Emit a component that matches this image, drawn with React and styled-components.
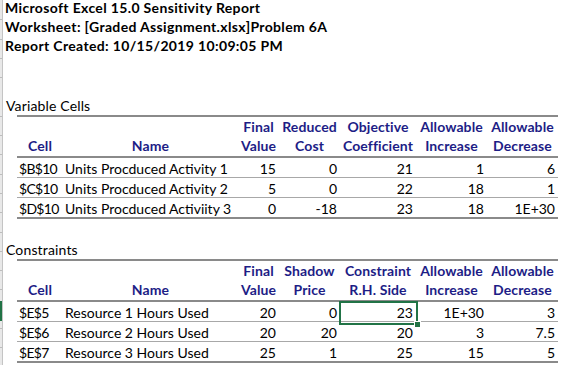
import styled, { createGlobalStyle } from "styled-components";

const GlobalStyle = createGlobalStyle`
  html, body {
    margin: 0;
    padding: 0;
    background: #fff;
  }
  body {
    font-family: Lato, "Liberation Sans", sans-serif;
    font-size: 14px;
    color: #000;
  }
`;

const COLS = "46px 175px 41px 61px 76px 71px 71px";

const variableRows = [
  ["$B$10", "Units Procduced Activity 1", "15", "0", "21", "1", "6"],
  ["$C$10", "Units Procduced Activity 2", "5", "0", "22", "18", "1"],
  ["$D$10", "Units Procduced Activiity 3", "0", "-18", "23", "18", "1E+30"],
];

const constraintRows = [
  ["$E$5", "Resource 1 Hours Used", "20", "0", "23", "1E+30", "3"],
  ["$E$6", "Resource 2 Hours Used", "20", "20", "20", "3", "7.5"],
  ["$E$7", "Resource 3 Hours Used", "25", "1", "25", "15", "5"],
];

const variableHead = [
  ["", "Cell"],
  ["", "Name"],
  ["Final", "Value"],
  ["Reduced", "Cost"],
  ["Objective", "Coefficient"],
  ["Allowable", "Increase"],
  ["Allowable", "Decrease"],
];

const constraintHead = [
  ["", "Cell"],
  ["", "Name"],
  ["Final", "Value"],
  ["Shadow", "Price"],
  ["Constraint", "R.H. Side"],
  ["Allowable", "Increase"],
  ["Allowable", "Decrease"],
];

const Sheet = styled.div`
  display: flex;
  width: 564px;
  height: 365px;
  overflow: hidden;
`;

const Gutter = styled.div`
  position: relative;
  flex: 0 0 2px;
  border-right: 1px solid #c4c4c4;
  background-color: #e8e8e8;
  background-image: repeating-linear-gradient(
    to bottom,
    transparent 0,
    transparent 18.3px,
    #bdbdbd 18.3px,
    #bdbdbd 19.3px
  );
  background-position: 0 1px;
`;

const RowMark = styled.span`
  position: absolute;
  left: 0;
  top: ${(p) => p.$top}px;
  width: 2px;
  height: 20px;
  background: #217346;
`;

const Content = styled.div`
  flex: 1;
  display: flex;
  flex-direction: column;
`;

const TitleBlock = styled.div`
  margin-top: -2px;
  padding-left: 2px;
  display: flex;
  flex-direction: column;
`;

const TitleLine = styled.div`
  height: 19px;
  line-height: 19px;
  font-weight: 700;
  letter-spacing: 0.35px;
  white-space: nowrap;
`;

const Section = styled.section`
  display: flex;
  flex-direction: column;
  margin-top: ${(p) => p.$gap}px;
`;

const SectionTitle = styled.div`
  height: 20px;
  line-height: 22px;
  padding-left: 3px;
  letter-spacing: 0.15px;
`;

const Table = styled.div`
  margin-left: 14px;
  width: 541px;
  border-top: 2px solid #8a8a8a;
  border-bottom: 2px solid #8a8a8a;
`;

const HeadRow = styled.div`
  display: grid;
  grid-template-columns: ${COLS};
  height: 39px;
  border-bottom: 2px solid #8a8a8a;
`;

const HeadCell = styled.div`
  display: flex;
  flex-direction: column;
  justify-content: flex-end;
  align-items: center;
  padding-bottom: 1px;
  font-weight: 700;
  color: #1d1d86;
  line-height: 19px;
  letter-spacing: 0.1px;
  white-space: nowrap;
`;

const DataRow = styled.div`
  display: grid;
  grid-template-columns: ${COLS};
  height: 19px;
  & + & {
    border-top: 1px solid #a8a8a8;
  }
`;

const Cell = styled.div`
  position: relative;
  line-height: 21px;
  padding: 0 3px 0 2px;
  text-align: ${(p) => (p.$num ? "right" : "left")};
  letter-spacing: ${(p) => (p.$ref ? "-0.7px" : "0")};
  white-space: nowrap;
  ${(p) =>
    p.$selected &&
    `
    &::before {
      content: "";
      position: absolute;
      left: -1px;
      right: -2px;
      top: -1px;
      bottom: -2px;
      border: 2px solid #217346;
      pointer-events: none;
    }
    &::after {
      content: "";
      position: absolute;
      right: -5px;
      bottom: -5px;
      width: 5px;
      height: 5px;
      background: #217346;
      border: 1px solid #fff;
    }
  `}
`;

const ReportTable = ({ head, rows, selected }) => (
  <Table>
    <HeadRow>
      {head.map(([a, b], i) => (
        <HeadCell key={i}>
          {a && <span>{a}</span>}
          <span>{b}</span>
        </HeadCell>
      ))}
    </HeadRow>
    {rows.map((row, r) => (
      <DataRow key={r}>
        {row.map((v, c) => (
          <Cell
            key={c}
            $num={c > 1}
            $ref={c === 0}
            $selected={selected && selected[0] === r && selected[1] === c}
          >
            {v}
          </Cell>
        ))}
      </DataRow>
    ))}
  </Table>
);

export default function App() {
  return (
    <>
      <GlobalStyle />
      <Sheet>
        <Gutter>
          <RowMark $top={301} />
        </Gutter>
        <Content>
          <TitleBlock>
            <TitleLine>Microsoft Excel 15.0 Sensitivity Report</TitleLine>
            <TitleLine>Worksheet: [Graded Assignment.xlsx]Problem 6A</TitleLine>
            <TitleLine>Report Created: 10/15/2019 10:09:05 PM</TitleLine>
          </TitleBlock>
          <Section $gap={40}>
            <SectionTitle>Variable Cells</SectionTitle>
            <ReportTable head={variableHead} rows={variableRows} />
          </Section>
          <Section $gap={20}>
            <SectionTitle>Constraints</SectionTitle>
            <ReportTable
              head={constraintHead}
              rows={constraintRows}
              selected={[0, 4]}
            />
          </Section>
        </Content>
      </Sheet>
    </>
  );
}
